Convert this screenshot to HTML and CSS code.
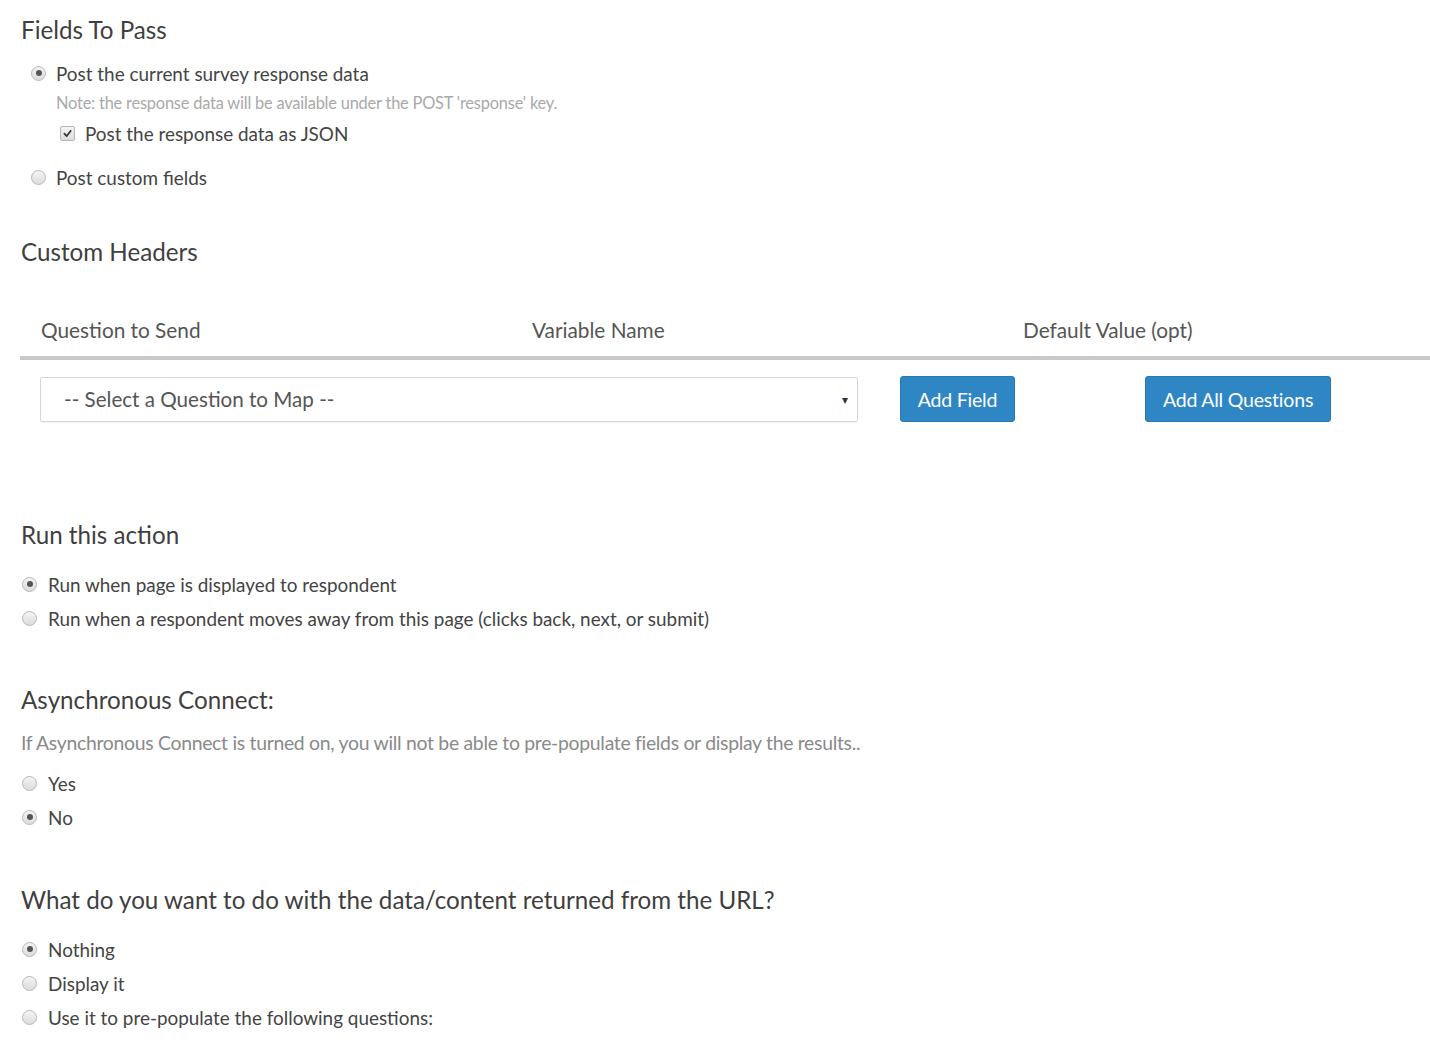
FILE: index.html
```html
<!DOCTYPE html>
<html>
<head>
<meta charset="utf-8">
<link rel="stylesheet" href="styles.css">
</head>
<body>
<div class="page">
  <h2 class="h h1st">Fields To Pass</h2>
  <div class="indent">
    <div class="opt"><span class="radio on"></span><span>Post the current survey response data</span></div>
    <div class="note small">Note: the response data will be available under the POST 'response' key.</div>
    <div class="opt chk-row"><span class="check"><svg viewBox="0 0 14 14" width="14" height="14"><path d="M3 7.2 L6 10.2 L11.2 3.6" fill="none" stroke="#333" stroke-width="2.2" stroke-linecap="round" stroke-linejoin="round"/></svg></span><span>Post the response data as JSON</span></div>
    <div class="opt gap10"><span class="radio"></span><span>Post custom fields</span></div>
  </div>

  <h2 class="h h-custom">Custom Headers</h2>
  <div class="thead">
    <div>Question to Send</div>
    <div>Variable Name</div>
    <div>Default Value (opt)</div>
  </div>
  <div class="trow">
    <div class="select"><span>-- Select a Question to Map --</span><span class="arrow">&#9662;</span></div>
    <button class="btn btn-field">Add Field</button>
    <button class="btn btn-all">Add All Questions</button>
  </div>

  <h2 class="h h-run">Run this action</h2>
  <div class="list gap17">
    <div class="opt"><span class="radio on"></span><span>Run when page is displayed to respondent</span></div>
    <div class="opt"><span class="radio"></span><span>Run when a respondent moves away from this page (clicks back, next, or submit)</span></div>
  </div>

  <h2 class="h h-async">Asynchronous Connect:</h2>
  <div class="note big">If Asynchronous Connect is turned on, you will not be able to pre-populate fields or display the results..</div>
  <div class="list gap10">
    <div class="opt"><span class="radio"></span><span>Yes</span></div>
    <div class="opt"><span class="radio on"></span><span>No</span></div>
  </div>

  <h2 class="h h-what">What do you want to do with the data/content returned from the URL?</h2>
  <div class="list gap17">
    <div class="opt"><span class="radio on"></span><span>Nothing</span></div>
    <div class="opt"><span class="radio"></span><span>Display it</span></div>
    <div class="opt"><span class="radio"></span><span>Use it to pre-populate the following questions:</span></div>
  </div>
</div>
</body>
</html>
```
FILE: styles.css
```css
html, body {
  margin: 0;
  padding: 0;
  background: #fff;
}
body {
  font-family: Lato, "Open Sans", sans-serif;
  color: #444;
  overflow: hidden;
}
.page {
  padding-left: 20px;
  width: 1410px;
}
.h {
  font-weight: 400;
  font-size: 24.2px;
  line-height: 30px;
  height: 30px;
  margin: 0;
  padding-left: 1px;
  color: #3f3f3f;
  white-space: nowrap;
}
.h1st { margin-top: 15px; }
.h-custom { margin-top: 43px; }
.h-run { margin-top: 98px; }
.h-async { margin-top: 50px; }
.h-what { margin-top: 51px; }

.indent {
  padding-left: 11px;
  margin-top: 11px;
}
.opt {
  display: flex;
  align-items: center;
  height: 34px;
  font-size: 18.9px;
  color: #444;
  white-space: nowrap;
}
.radio {
  width: 13px;
  height: 13px;
  border-radius: 50%;
  border: 1px solid #b8b8b8;
  background: linear-gradient(#f4f4f4, #dcdcdc);
  margin-right: 10px;
  flex: none;
  position: relative;
  box-sizing: content-box;
}
.radio.on::after {
  content: "";
  position: absolute;
  left: 3.5px;
  top: 3.5px;
  width: 6px;
  height: 6px;
  border-radius: 50%;
  background: #555;
}
.list { padding-left: 2px; }
.list .radio { margin-right: 11px; }
.note {
  color: #a9a9a9;
  height: 26px;
  line-height: 26px;
  white-space: nowrap;
}
.note.small {
  font-size: 16.4px;
  padding-left: 25px;
  letter-spacing: -0.2px;
}
.note.big {
  font-size: 19.4px;
  color: #8a8a8a;
  margin-top: 15px;
  padding-left: 1px;
  letter-spacing: -0.3px;
}
.chk-row { padding-left: 29px; }
.check {
  width: 13px;
  height: 13px;
  border: 1px solid #b8b8b8;
  border-radius: 2px;
  background: linear-gradient(#f4f4f4, #dcdcdc);
  margin-right: 10px;
  display: flex;
  align-items: center;
  justify-content: center;
  flex: none;
}
.check svg { width: 11px; height: 11px; }
.gap10 { margin-top: 10px; }
.gap17 { margin-top: 17px; }
.list.gap10 { margin-top: 10px; }

.thead {
  margin-top: 35px;
  height: 54px;
  display: grid;
  grid-template-columns: 491px 491px auto;
  align-items: center;
  padding-left: 21px;
  font-size: 20.8px;
  color: #555;
  border-bottom: 4px solid #c8c8c8;
}
.trow {
  margin-top: 16px;
  display: flex;
  align-items: center;
  padding-left: 20px;
  height: 46px;
}
.select {
  box-sizing: border-box;
  width: 818px;
  height: 45px;
  border: 1px solid #d6d6d6;
  border-radius: 2px;
  display: flex;
  align-items: center;
  justify-content: space-between;
  padding: 0 9px 0 23px;
  font-size: 20.6px;
  color: #555;
  box-shadow: 0 1px 1px rgba(0,0,0,0.05);
  white-space: nowrap;
}
.select .arrow {
  font-size: 12px;
  color: #333;
}
.btn {
  font-family: Lato, "Open Sans", sans-serif;
  background: #2f86c4;
  color: #fff;
  border: 1px solid #2a78b0;
  border-radius: 3px;
  height: 46px;
  font-size: 19.5px;
  padding: 0;
  letter-spacing: -0.2px;
  white-space: nowrap;
}
.btn-field {
  margin-left: 42px;
  width: 115px;
}
.btn-all {
  margin-left: 130px;
  width: 186px;
}
```
